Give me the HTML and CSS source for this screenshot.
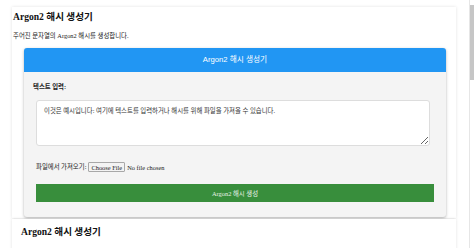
FILE: index.html
```html
<!DOCTYPE html>
<html>
<head>
    <link rel="stylesheet" href="styles.css">
</head>
<body>
    <div class="container">
        <h2 class="title">Argon2 해시 생성기</h2>
        <p class="intro">주어진 문자열의 Argon2 해시를 생성합니다.</p>
        <div class="card">
            <div class="card-header">Argon2 해시 생성기</div>
            <div class="card-body">
                <label class="lbl" for="Input_Text">텍스트 입력:</label>
                <textarea id="Input_Text" class="input-text">이것은 예시입니다: 여기에 텍스트를 입력하거나 해시를 위해 파일을 가져올 수 있습니다.</textarea>
                <div class="file-row">
                    <span>파일에서 가져오기:</span>
                    <input type="file" id="File_Input" class="file-input"/>
                </div>
                <button class="btn-generate">Argon2 해시 생성</button>
            </div>
        </div>
    </div>
    <div class="container result">
        <h2 class="title">Argon2 해시 생성기</h2>
    </div>
    <!-- page scrollbar -->
    <div class="scrollbar"><div class="scroll-thumb"></div></div>
</body>
</html>
```

FILE: styles.css
```css
body
{
    margin: 0;
    padding: 7px 18px 9px 12px;
    background: #fff;
    color: #222;
    font-family: "Liberation Serif", "Noto Sans CJK KR", serif;
    font-size: 6.4px;
    line-height: 8px;
}
.scrollbar
{
    position: fixed;
    top: 0;
    right: 0;
    width: 5px;
    height: 100%;
    background: #fff;
    border-left: 1px solid #e6e6e6;
    padding-top: 5px;
    box-sizing: border-box;
}
.scroll-thumb
{
    width: 5px;
    height: 75px;
    background: #c6c6c6;
}
.container
{
    background: #fff;
    box-shadow: 0 0 3px rgba(0,0,0,0.12);
    padding: 0 0 1px 1px;
}
.title
{
    margin: 0;
    padding-top: 4px;
    font-size: 9.6px;
    line-height: 12px;
    color: #111;
}
.intro
{
    margin: 9px 0 0 0;
}
.card
{
    margin: 8px 10px 0 11px;
    background: #f4f4f4;
    border-radius: 3px;
    box-shadow: 0 1px 3px rgba(0,0,0,0.3);
}
.card-header
{
    height: 24px;
    line-height: 24px;
    background: #2196f3;
    color: #fff;
    text-align: center;
    font-family: "Liberation Sans", "Noto Sans CJK KR", sans-serif;
    font-size: 7.68px;
    border-radius: 3px 3px 0 0;
}
.card-body
{
    padding: 11px 12px 15px 12px;
}
.lbl
{
    display: block;
    margin-left: -3px;
    font-weight: bold;
}
.input-text
{
    display: block;
    box-sizing: border-box;
    width: calc(100% - 4px);
    height: 46px;
    margin-top: 9px;
    padding: 6px 7px;
    border: 1px solid #ddd;
    border-radius: 3px;
    background: #fff;
    color: #333;
    font-family: inherit;
    font-size: 6.4px;
    line-height: 8px;
    resize: vertical;
}
.file-row
{
    display: flex;
    align-items: center;
    gap: 2px;
    margin-top: 16px;
    height: 10px;
}
.file-input
{
    font-family: inherit;
    font-size: 6.4px;
    color: #222;
}
.file-input::file-selector-button
{
    font-family: inherit;
    font-size: 6.4px;
    height: 10px;
    padding: 0 2px;
    margin-right: 2px;
    border: 1px solid #a8a8a8;
    border-radius: 1px;
    background: #f3f3f3;
    color: #222;
}
.btn-generate
{
    display: block;
    width: 100%;
    height: 18px;
    margin-top: 12px;
    border: none;
    background: #388e3c;
    color: #e8f2e8;
    font-family: inherit;
    font-size: 6.4px;
}
.result
{
    height: 560px;
    padding-left: 9px;
    margin-top: 1px;
}
.result .title
{
    padding-top: 7px;
}
```
